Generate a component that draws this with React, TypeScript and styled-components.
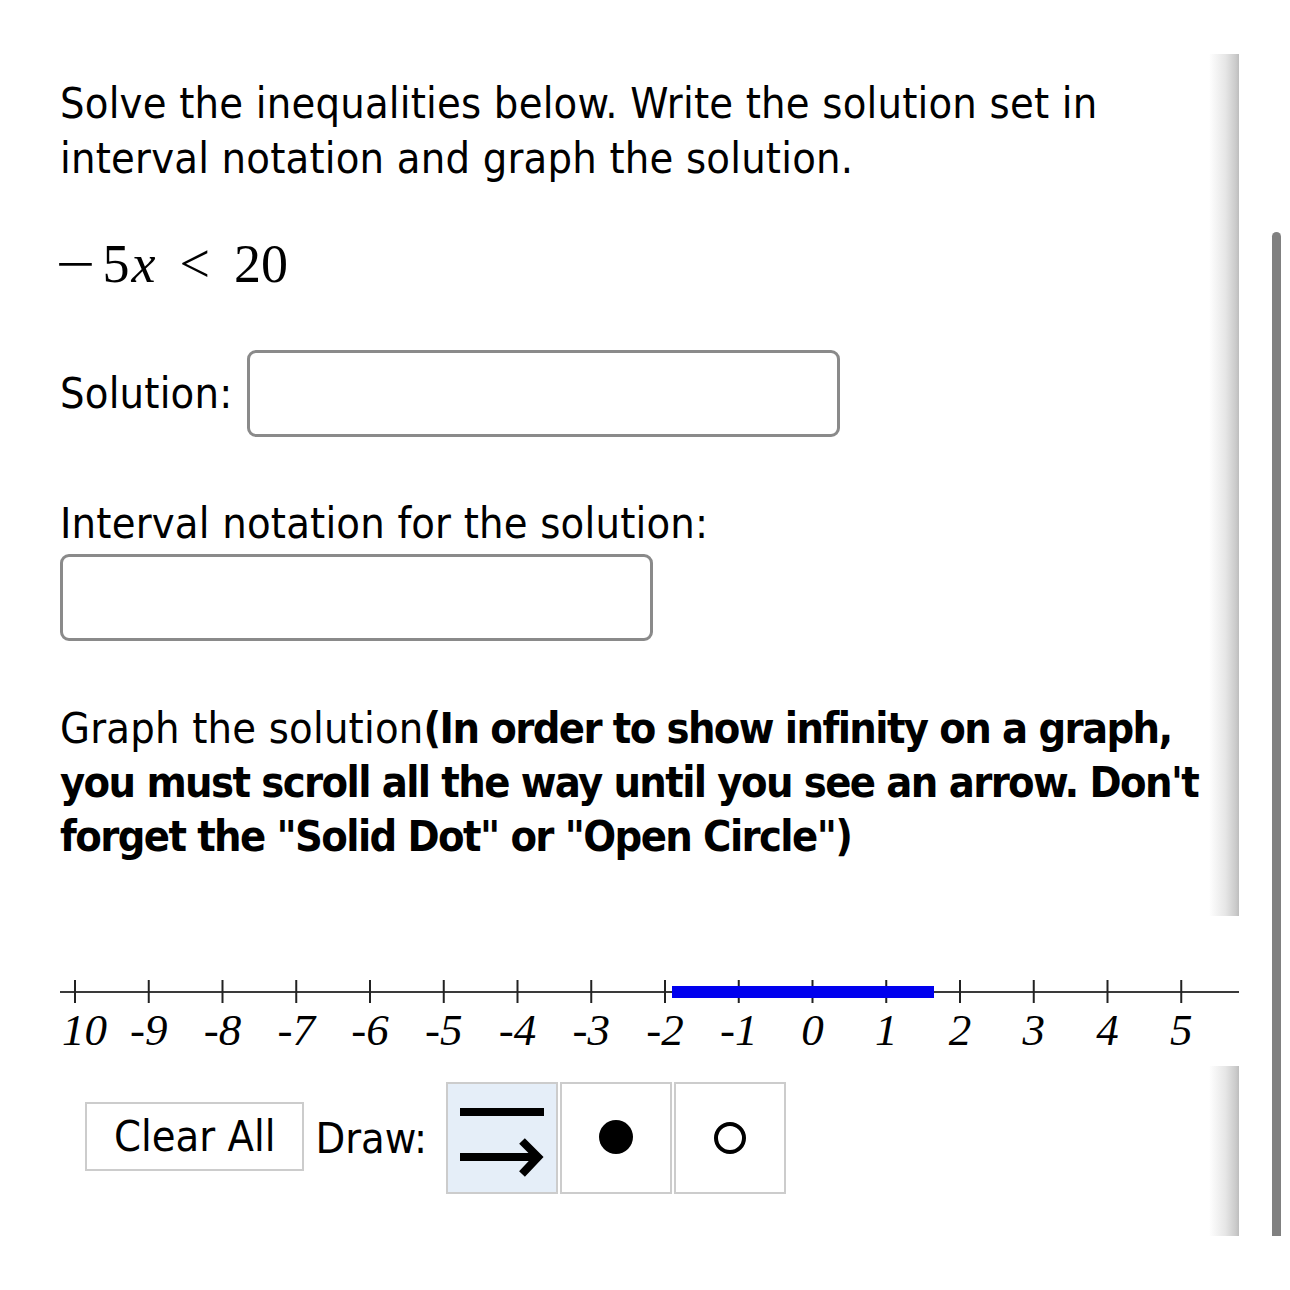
import styled, { createGlobalStyle } from "styled-components";

const GlobalStyle = createGlobalStyle`
  html, body {
    margin: 0;
    padding: 0;
    background: #ffffff;
  }
  body {
    font-family: "DejaVu Sans Condensed", "DejaVu Sans", sans-serif;
    color: #000;
  }
`;

const Page = styled.div`
  display: flex;
  padding: 54px 0 0 60px;
  width: 1290px;
  height: 1290px;
  box-sizing: border-box;
`;

const Main = styled.div`
  width: 1179px;
  flex-shrink: 0;
  display: flex;
  flex-direction: column;
`;

const Section = styled.div<{ $height: number }>`
  display: flex;
  height: ${(p) => p.$height}px;
`;

const Content = styled.div`
  flex: 1;
  min-width: 0;
  padding-top: 22px;
  display: flex;
  flex-direction: column;
  align-items: flex-start;
`;

const Shade = styled.div`
  width: 30px;
  flex-shrink: 0;
  background: linear-gradient(to right, #ffffff 0%, #e6e6e6 55%, #cacaca 90%, #bdbdbd 100%);
`;

const Scrollbar = styled.div`
  width: 9px;
  flex-shrink: 0;
  margin-left: 33px;
  margin-top: 178px;
  height: 1004px;
  background: #808080;
  border-radius: 5px 5px 0 0;
`;

const Prompt = styled.p`
  margin: 0;
  font-size: 43px;
  line-height: 55px;
  letter-spacing: 0.2px;
  white-space: nowrap;
`;

const MathLine = styled.div`
  margin-top: 47px;
  font-family: "Liberation Serif", "Times New Roman", serif;
  font-size: 54px;
  line-height: 62px;
  white-space: nowrap;
`;

const MathOp = styled.span<{ $left?: number; $right?: number; $wide?: boolean }>`
  display: inline-block;
  margin-left: ${(p) => p.$left ?? 0}px;
  margin-right: ${(p) => p.$right ?? 0}px;
  transform: ${(p) => (p.$wide ? "scaleX(1.3)" : "none")};
`;

const MathVar = styled.span`
  font-style: italic;
  margin-left: 2px;
`;

const Row = styled.div<{ $top: number }>`
  display: flex;
  align-items: center;
  gap: 15px;
  margin-top: ${(p) => p.$top}px;
`;

const Label = styled.div<{ $top?: number }>`
  font-size: 43px;
  line-height: 55px;
  letter-spacing: 0.2px;
  margin-top: ${(p) => p.$top ?? 0}px;
  white-space: nowrap;
`;

const AnswerBox = styled.input<{ $top?: number }>`
  width: 593px;
  height: 87px;
  margin-top: ${(p) => p.$top ?? 0}px;
  box-sizing: border-box;
  border: 3px solid #8a8a8a;
  border-radius: 9px;
  background: #fff;
  font-size: 40px;
  padding: 0 14px;
  outline: none;
`;

const GraphText = styled.p`
  margin: 60px 0 0;
  font-size: 43px;
  line-height: 54px;
  letter-spacing: 0.2px;
  white-space: nowrap;
`;

const Strong = styled.strong`
  font-weight: bold;
  letter-spacing: -1.6px;
`;

const LineArea = styled.div`
  height: 150px;
`;

const Controls = styled.div`
  flex: 1;
  display: flex;
  align-items: center;
  align-self: flex-start;
  padding: 16px 0 0 25px;
`;

const ClearButton = styled.button`
  font-family: inherit;
  font-size: 43px;
  line-height: 55px;
  padding: 5px 27px;
  background: #fff;
  color: #000;
  border: 2px solid #cccccc;
  border-radius: 0;
  margin-top: -4px;
`;

const DrawLabel = styled.span`
  font-size: 43px;
  line-height: 55px;
  margin: 0 19px 0 11px;
`;

const ToolGroup = styled.div`
  display: flex;
  gap: 2px;
`;

const ToolButton = styled.button<{ $active?: boolean }>`
  width: 112px;
  height: 112px;
  padding: 0;
  border: 2px solid #cccccc;
  background: ${(p) => (p.$active ? "#e5eef8" : "#ffffff")};
  display: flex;
  align-items: center;
  justify-content: center;
`;

const ticks = Array.from({ length: 16 }, (_, i) => ({
  value: i - 10,
  x: 15 + i * 73.75,
}));

// the first label is clipped in the original, so only "10" is visible
const tickLabel = (v: number) => (v === -10 ? "10" : v < 0 ? `-${Math.abs(v)}` : `${v}`);

function NumberLine() {
  return (
    <svg width="1179" height="150" viewBox="0 0 1179 150">
      <line x1="0" y1="76" x2="1179" y2="76" stroke="#3a3a3a" strokeWidth="2" />
      {ticks.map((t) => (
        <line key={`t${t.value}`} x1={t.x} y1="64" x2={t.x} y2="87" stroke="#222" strokeWidth="2" />
      ))}
      <rect x="612" y="70" width="262" height="12" fill="#0000ee" />
      {ticks.map((t) => (
        <text
          key={`l${t.value}`}
          x={t.value === -10 ? 2 : t.x}
          y="129"
          textAnchor={t.value === -10 ? "start" : "middle"}
          fontFamily="'Liberation Serif', 'Times New Roman', serif"
          fontStyle="italic"
          fontSize="45"
          fill="#000"
        >
          {tickLabel(t.value)}
        </text>
      ))}
    </svg>
  );
}

function RayIcon() {
  return (
    <svg width="108" height="108" viewBox="0 0 108 108">
      <rect x="12" y="24" width="84" height="8" fill="#000" />
      <rect x="12" y="69" width="78" height="8" fill="#000" />
      <polyline points="74,57 90,73 74,90" fill="none" stroke="#000" strokeWidth="8" strokeLinejoin="miter" />
    </svg>
  );
}

function DotIcon({ filled }: { filled: boolean }) {
  return (
    <svg width="108" height="108" viewBox="0 0 108 108">
      {filled ? (
        <circle cx="54" cy="53" r="17" fill="#000" />
      ) : (
        <circle cx="54" cy="54" r="14" fill="#fff" stroke="#000" strokeWidth="4" />
      )}
    </svg>
  );
}

export default function App() {
  return (
    <>
      <GlobalStyle />
      <Page>
        <Main>
          <Section $height={862}>
            <Content>
              <Prompt>
                Solve the inequalities below. Write the solution set in
                <br />
                interval notation and graph the solution.
              </Prompt>
              <MathLine>
                <MathOp $wide $right={12}>−</MathOp>5<MathVar>x</MathVar>
                <MathOp $left={24} $right={24}>&lt;</MathOp>20
              </MathLine>
              <Row $top={55}>
                <Label>Solution:</Label>
                <AnswerBox type="text" aria-label="Solution" />
              </Row>
              <Label $top={59}>Interval notation for the solution:</Label>
              <AnswerBox $top={3} type="text" aria-label="Interval notation" />
              <GraphText>
                Graph the solution
                <Strong>
                  (In order to show infinity on a graph,
                  <br />
                  you must scroll all the way until you see an arrow. Don't
                  <br />
                  forget the "Solid Dot" or "Open Circle")
                </Strong>
              </GraphText>
            </Content>
            <Shade />
          </Section>
          <LineArea>
            <NumberLine />
          </LineArea>
          <Section $height={170}>
            <Controls>
              <ClearButton>Clear All</ClearButton>
              <DrawLabel>Draw:</DrawLabel>
              <ToolGroup>
                <ToolButton $active aria-label="Ray">
                  <RayIcon />
                </ToolButton>
                <ToolButton aria-label="Solid dot">
                  <DotIcon filled />
                </ToolButton>
                <ToolButton aria-label="Open circle">
                  <DotIcon filled={false} />
                </ToolButton>
              </ToolGroup>
            </Controls>
            <Shade />
          </Section>
        </Main>
        <Scrollbar />
      </Page>
    </>
  );
}
